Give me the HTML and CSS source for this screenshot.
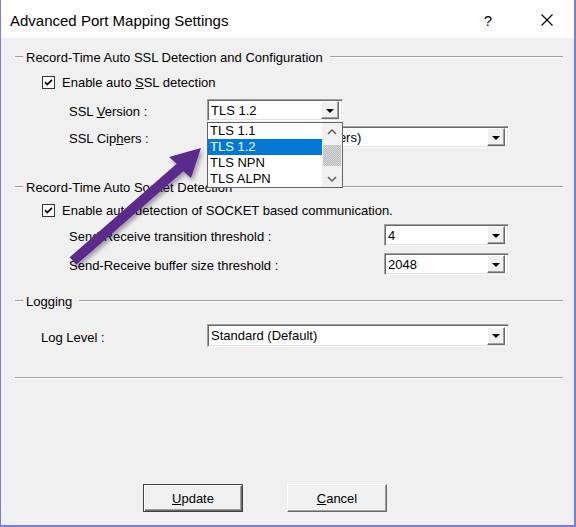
FILE: index.html
```html
<!DOCTYPE html>
<html>
<head>
<meta charset="utf-8">
<title>Advanced Port Mapping Settings</title>
<link rel="stylesheet" href="styles.css">
</head>
<body>
<div class="window">
  <div class="titlebar">
    <span class="title">Advanced Port Mapping Settings</span>
    <span class="help">?</span>
    <svg class="close" width="12" height="12" viewBox="0 0 12 12"><path d="M0.5 0.5L11.5 11.5M11.5 0.5L0.5 11.5" stroke="#000" stroke-width="1.1" fill="none"/></svg>
  </div>

  <div class="content">
    <div class="group-head g1"><span class="dash"></span><span class="gtitle">Record-Time Auto SSL Detection and Configuration</span><span class="gline"></span></div>
    <div class="check-row c1">
      <span class="checkbox"><svg width="9" height="9" viewBox="0 0 9 9"><path d="M1 4.2L3.3 6.6L8 1.8" stroke="#000" stroke-width="1.7" fill="none"/></svg></span>
      <span class="clabel">Enable auto <u>S</u>SL detection</span>
    </div>
    <div class="row r-ver">
      <span class="label l-ssl">SSL <u>V</u>ersion :</span>
      <div class="combo w-ver"><span class="value">TLS 1.2</span><span class="dbtn"><span class="tri"></span></span></div>
    </div>
    <div class="row r-ciph">
      <span class="label l-ssl">SSL Cip<u>h</u>ers :</span>
      <div class="combo w-wide"><span class="value">Default (Allow All Ciphers)</span><span class="dbtn"><span class="tri"></span></span></div>
    </div>

    <div class="group-head g2"><span class="dash"></span><span class="gtitle">Record-Time Auto Socket Detection</span><span class="gline"></span></div>
    <div class="check-row c2">
      <span class="checkbox"><svg width="9" height="9" viewBox="0 0 9 9"><path d="M1 4.2L3.3 6.6L8 1.8" stroke="#000" stroke-width="1.7" fill="none"/></svg></span>
      <span class="clabel">Enable auto detection of SOCKET based communication.</span>
    </div>
    <div class="row r-trans">
      <span class="label l-sock">Send-Receive transition threshold :</span>
      <div class="combo w-sock"><span class="value">4</span><span class="dbtn"><span class="tri"></span></span></div>
    </div>
    <div class="row r-buf">
      <span class="label l-sock">Send-Receive buffer size threshold :</span>
      <div class="combo w-sock"><span class="value">2048</span><span class="dbtn"><span class="tri"></span></span></div>
    </div>

    <div class="group-head g3"><span class="dash"></span><span class="gtitle">Logging</span><span class="gline"></span></div>
    <div class="row r-log">
      <span class="label l-log">Log Level :</span>
      <div class="combo w-wide tall"><span class="value">Standard (Default)</span><span class="dbtn"><span class="tri"></span></span></div>
    </div>

    <div class="separator"></div>

    <div class="btn-row">
      <span class="button default"><u>U</u>pdate</span>
      <span class="button"><u>C</u>ancel</span>
    </div>
  </div>

  <div class="dropdown">
    <div class="items">
      <div class="item">TLS 1.1</div>
      <div class="item selected">TLS 1.2</div>
      <div class="item">TLS NPN</div>
      <div class="item">TLS ALPN</div>
    </div>
    <div class="scrollbar">
      <div class="sarrow"><svg width="10" height="6" viewBox="0 0 10 6"><path d="M1 5L5 1L9 5" stroke="#606060" stroke-width="1.5" fill="none"/></svg></div>
      <div class="track"><div class="thumb"></div></div>
      <div class="sarrow"><svg width="10" height="6" viewBox="0 0 10 6"><path d="M1 1L5 5L9 1" stroke="#606060" stroke-width="1.5" fill="none"/></svg></div>
    </div>
  </div>

  <svg class="arrow" width="576" height="527" viewBox="0 0 576 527">
    <defs>
      <filter id="sh" x="-20%" y="-20%" width="140%" height="140%">
        <feGaussianBlur in="SourceAlpha" stdDeviation="2"/>
        <feOffset dx="2" dy="3" result="b"/>
        <feComponentTransfer><feFuncA type="linear" slope="0.35"/></feComponentTransfer>
        <feMerge><feMergeNode/><feMergeNode in="SourceGraphic"/></feMerge>
      </filter>
    </defs>
    <polygon filter="url(#sh)" fill="#5b2a8c" points="69.7,257.3 176.7,163.8 169,157 201,148 191,178 183.3,171.3 76.3,264.8"/>
  </svg>
</div>
</body>
</html>
```

FILE: styles.css
```css
* { box-sizing: border-box; }

body {
  margin: 0;
  background: #ffffff;
}

.window {
  position: relative;
  width: 576px;
  height: 527px;
  background: #f0f0f0;
  border-left: 1px solid #7b7be0;
  border-right: 2px solid #7b7be0;
  border-bottom: 2px solid #7b7be0;
  font-family: "Liberation Sans", Arial, sans-serif;
  font-size: 13px;
  color: #000;
}

u { text-decoration: underline; text-underline-offset: 1px; }

/* title bar */
.titlebar {
  height: 38px;
  background: #fff;
  display: flex;
  align-items: center;
  padding: 2px 21px 0 9px;
}
.title { flex: 1; font-size: 15px; }
.help { font-size: 15px; margin-right: 49px; }
.close { display: block; }

/* content */
.content {
  display: flex;
  flex-direction: column;
  padding: 0 11px 0 14px;
}

.group-head {
  display: flex;
  align-items: center;
  height: 16px;
}
.dash, .gline {
  height: 2px;
  border-top: 1px solid #a0a0a0;
  border-bottom: 1px solid #ffffff;
}
.dash { width: 8px; }
.gtitle { margin: 0 7px 0 3px; white-space: nowrap; }
.gline { flex: 1; }

.g1 { margin-top: 11px; }
.g2 { margin-top: 31px; }
.g3 { margin-top: 18px; }

.check-row {
  display: flex;
  align-items: center;
  height: 16px;
  padding-left: 27px;
}
.c1 { margin-top: 9px; }
.c2 { margin-top: 7px; }

.checkbox {
  width: 13px;
  height: 13px;
  background: #fff;
  border: 1px solid #333;
  display: flex;
  align-items: center;
  justify-content: center;
}
.clabel { margin-left: 7px; white-space: nowrap; }

.row {
  display: flex;
  align-items: center;
}
.label {
  white-space: nowrap;
  padding-top: 3px;
}
.l-ssl { width: 192px; padding-left: 54px; }
.l-sock { width: 369px; padding-left: 54px; }
.l-log { width: 192px; padding-left: 26px; }

.r-ver { margin-top: 9px; }
.r-ciph { margin-top: 5px; }
.r-trans { margin-top: 6px; }
.r-buf { margin-top: 7px; }
.r-log { margin-top: 15px; }

/* combo box */
.combo {
  display: flex;
  align-items: center;
  height: 22px;
  background: #fff;
  border: 1px solid;
  border-color: #a0a0a0 #ffffff #ffffff #a0a0a0;
  box-shadow: inset 1px 1px 0 #696969, inset -1px -1px 0 #e3e3e3;
  padding: 0 3px 0 3px;
}
.combo.tall { height: 23px; }
.w-ver { width: 136px; }
.w-wide { width: 302px; }
.w-sock { width: 125px; }
.combo .value {
  flex: 1;
  white-space: nowrap;
  overflow: hidden;
}
.dbtn {
  width: 18px;
  height: 18px;
  background: #f0f0f0;
  border: 1px solid;
  border-color: #ffffff #696969 #696969 #ffffff;
  box-shadow: inset -1px -1px 0 #a0a0a0;
  display: flex;
  align-items: center;
  justify-content: center;
}
.tri {
  width: 0;
  height: 0;
  border-left: 4px solid transparent;
  border-right: 4px solid transparent;
  border-top: 4px solid #000;
  margin-top: 1px;
}

.separator {
  margin-top: 30px;
  height: 2px;
  border-top: 1px solid #a0a0a0;
  border-bottom: 1px solid #ffffff;
}

/* buttons */
.btn-row {
  display: flex;
  gap: 44px;
  margin-top: 105px;
  padding-left: 128px;
}
.button {
  width: 100px;
  height: 28px;
  display: flex;
  align-items: center;
  justify-content: center;
  background: #f0f0f0;
  border: 1px solid;
  border-color: #ffffff #696969 #696969 #ffffff;
  box-shadow: inset -1px -1px 0 #a0a0a0;
}
.button.default {
  border: 1px solid #404040;
  box-shadow: inset 1px 1px 0 #ffffff, inset -1px -1px 0 #696969, inset -2px -2px 0 #a0a0a0;
}

/* open dropdown list */
.dropdown {
  position: absolute;
  left: 206px;
  top: 122px;
  width: 136px;
  height: 66px;
  background: #fff;
  border: 1px solid #646464;
  display: flex;
}
.items { width: 114px; }
.item {
  height: 16px;
  line-height: 16px;
  padding-left: 2px;
  white-space: nowrap;
}
.item.selected { background: #0078d7; color: #fff; }

.scrollbar {
  width: 20px;
  display: flex;
  flex-direction: column;
  background: #f0f0f0;
}
.sarrow {
  height: 17px;
  display: flex;
  align-items: center;
  justify-content: center;
}
.track { flex: 1; padding-top: 5px; }
.thumb {
  height: 21px;
  margin: 0 1px;
  background-color: #cdcdcd;
  background-image: repeating-conic-gradient(#bdbdbd 0 25%, #d6d6d6 0 50%);
  background-size: 2px 2px;
}

/* annotation arrow */
.arrow {
  position: absolute;
  left: -1px;
  top: 0;
  pointer-events: none;
}
```
